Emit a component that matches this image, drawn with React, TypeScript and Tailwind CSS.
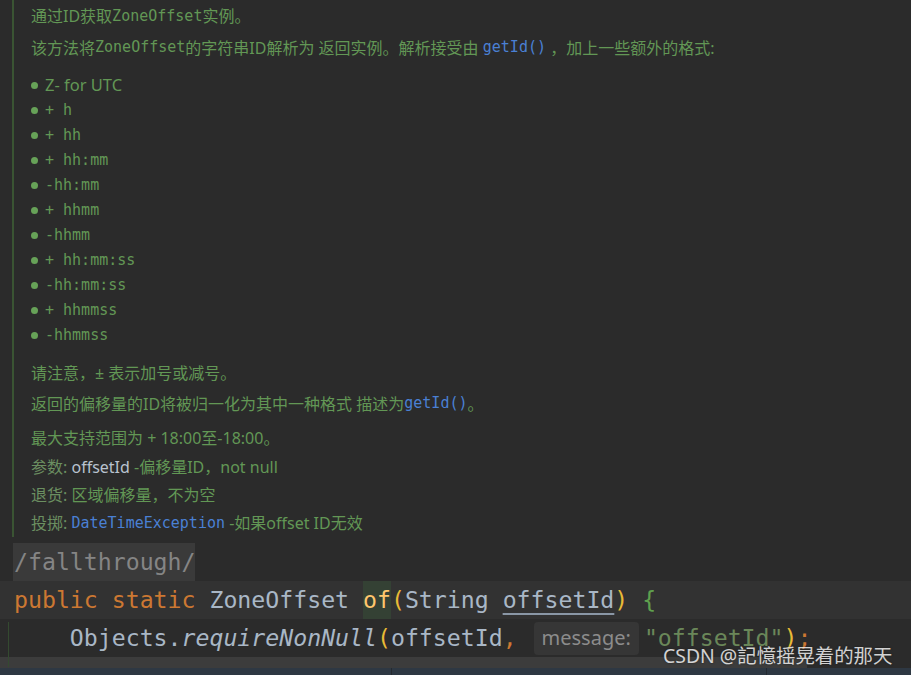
const MONO = "font-['DejaVu_Sans_Mono',monospace]"

const BULLETS: Array<{ text: string; mono: boolean }> = [
  { text: 'Z- for UTC', mono: false },
  { text: '+ h', mono: true },
  { text: '+ hh', mono: true },
  { text: '+ hh:mm', mono: true },
  { text: '-hh:mm', mono: true },
  { text: '+ hhmm', mono: true },
  { text: '-hhmm', mono: true },
  { text: '+ hh:mm:ss', mono: true },
  { text: '-hh:mm:ss', mono: true },
  { text: '+ hhmmss', mono: true },
  { text: '-hhmmss', mono: true },
]

function Code({ children, className = '' }: { children: React.ReactNode; className?: string }) {
  return <span className={`${MONO} text-[15px] ${className}`}>{children}</span>
}

function DocComment() {
  return (
    <div className="ml-3 h-[537px] border-l-2 border-[#3a5433] pl-[17px] font-['Noto_Sans','Noto_Sans_CJK_SC',sans-serif] text-[16px] text-[#629755]">
      <p className="flex h-[32px] items-center whitespace-pre">
        通过ID获取<Code>ZoneOffset</Code>实例。
      </p>
      <p className="flex h-[31px] items-center whitespace-pre">
        该方法将<Code>ZoneOffset</Code>的字符串ID解析为 返回实例。解析接受由{' '}
        <Code className="text-[#4a80d4]">getId()</Code> ，加上一些额外的格式:
      </p>

      <ul className="mt-[10px]">
        {BULLETS.map((b) => (
          <li key={b.text} className="flex h-[25px] items-center gap-[7px]">
            <span className="h-[7px] w-[7px] shrink-0 rounded-full bg-[#67a258]" />
            {b.mono ? <Code>{b.text}</Code> : <span className="text-[16.5px]">{b.text}</span>}
          </li>
        ))}
      </ul>

      <p className="mt-[9px] flex h-[31px] items-center whitespace-pre">请注意，± 表示加号或减号。</p>
      <p className="flex h-[31px] items-center whitespace-pre">
        返回的偏移量的ID将被归一化为其中一种格式 描述为<Code className="text-[#4a80d4]">getId()</Code>。
      </p>
      <p className="mt-[3px] flex h-[31px] items-center whitespace-pre">最大支持范围为 + 18:00至-18:00。</p>
      <p className="flex h-[28px] items-center whitespace-pre">
        <span className="text-[#6b8f61]">参数: </span>
        <span className="text-[#b9c3cf]">offsetId</span> -偏移量ID，not null
      </p>
      <p className="flex h-[28px] items-center whitespace-pre">
        <span className="text-[#6b8f61]">退货: </span>区域偏移量，不为空
      </p>
      <p className="flex h-[28px] items-center whitespace-pre">
        <span className="text-[#6b8f61]">投掷: </span>
        <Code className="text-[#4a80d4]">DateTimeException</Code> -如果offset ID无效
      </p>
    </div>
  )
}

function SourceLines() {
  return (
    <div className={`mt-[6px] ${MONO} text-[23.2px] whitespace-pre text-[#a9b7c6]`}>
      <div className="flex h-[38px] items-stretch pl-[13px]">
        <span className="flex items-center bg-[#3a3a3a] pl-px text-[#858585]">/fallthrough/</span>
      </div>

      <div className="flex h-[38px] items-center bg-[#323232] pl-[14px]">
        <span className="text-[#cc7832]">public static </span>
        <span>ZoneOffset </span>
        <span className="flex h-full items-center bg-[#344134] text-[#ffc66d]">of</span>
        <span className="text-[#e8ba36]">(</span>
        <span>String </span>
        <span className="underline decoration-[#8a97a6] underline-offset-[5px]">offsetId</span>
        <span className="text-[#e8ba36]">)</span>
        <span> </span>
        <span className="text-[#5fa04e]">{'{'}</span>
      </div>

      <div className="relative flex h-[38px] items-center pl-[14px]">
        <span className="absolute top-[3px] left-2 h-[45px] w-px bg-[#344a30]" />
        <span>{'    Objects.'}</span>
        <span className="italic">requireNonNull</span>
        <span className="text-[#e8ba36]">(</span>
        <span>offsetId</span>
        <span className="text-[#cc7832]">, </span>
        <span className="ml-[3px] flex h-[33px] items-center rounded-[4px] bg-[#363636] px-[8px] font-['Noto_Sans',sans-serif] text-[20px] text-[#8c8c8c]">
          message:
        </span>
        <span className="ml-[5px] text-[#6a8759]">"offsetId"</span>
        <span className="text-[#e8ba36]">)</span>
        <span className="text-[#cc7832]">;</span>
      </div>
    </div>
  )
}

export default function App() {
  return (
    <div className="relative h-[675px] w-[911px] overflow-hidden bg-[#2b2b2b]">
      <DocComment />
      <SourceLines />

      <div className="h-[11px] w-[807px] bg-[#3c3c3c]" />
      <div className="flex h-[7px] bg-[#2e3843]">
        <div className="w-[392px] border-r border-[#252a30]" />
        <div className="w-[375px] border-r border-[#252a30]" />
      </div>

      <div className="absolute top-[642px] left-[663px] font-['Noto_Sans','Noto_Sans_CJK_SC',sans-serif] text-[19.4px] leading-[28px] text-white/80 [text-shadow:0_0_2px_rgba(0,0,0,0.5)]">
        CSDN @記憶摇晃着的那天
      </div>
    </div>
  )
}
